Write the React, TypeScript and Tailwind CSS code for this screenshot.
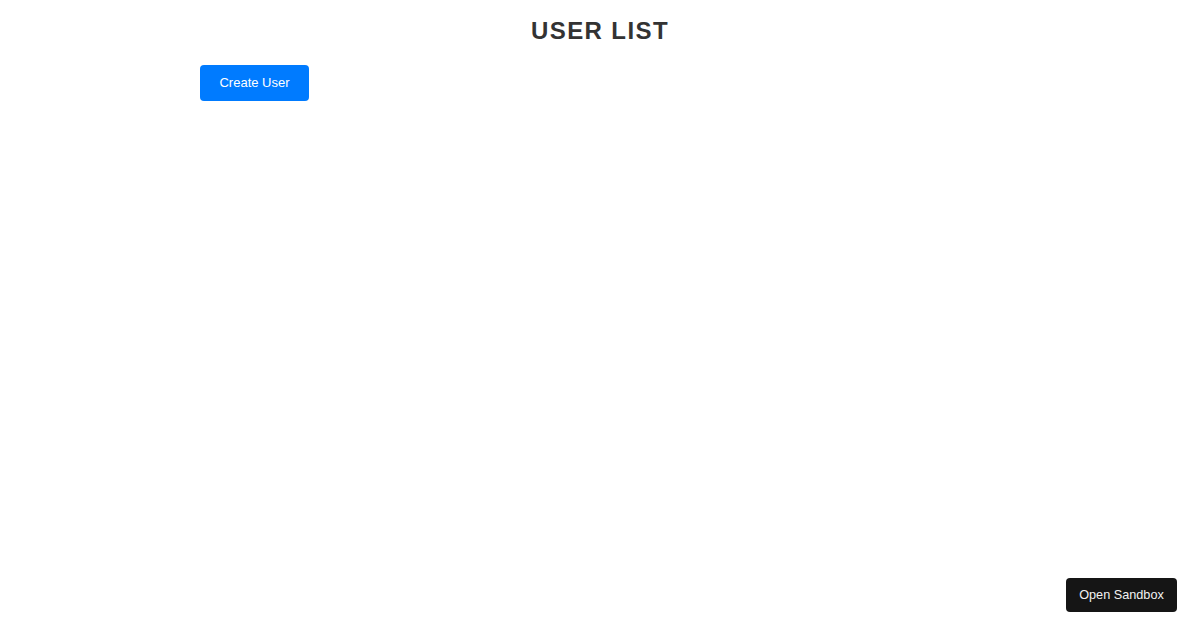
export default function App() {
  return (
    <div className="relative min-h-screen bg-white" style={{ fontFamily: '"Liberation Sans", Arial, sans-serif' }}>
      <div className="mx-auto w-[800px] pt-[13px]">
        <h1 className="text-center text-[24px] font-bold leading-[36px] tracking-[1.4px] text-[#333333]">
          USER LIST
        </h1>
        <div className="mt-[16px]">
          <button className="h-[36px] w-[109px] rounded-[4px] bg-[#007bff] text-[13px] text-white">
            Create User
          </button>
        </div>
      </div>
      <button className="absolute bottom-[18px] right-[23px] h-[34px] w-[111px] rounded-[4px] bg-[#151515] pt-[2px] text-[12.7px] text-[#f2f2f2]">
        Open Sandbox
      </button>
    </div>
  )
}
